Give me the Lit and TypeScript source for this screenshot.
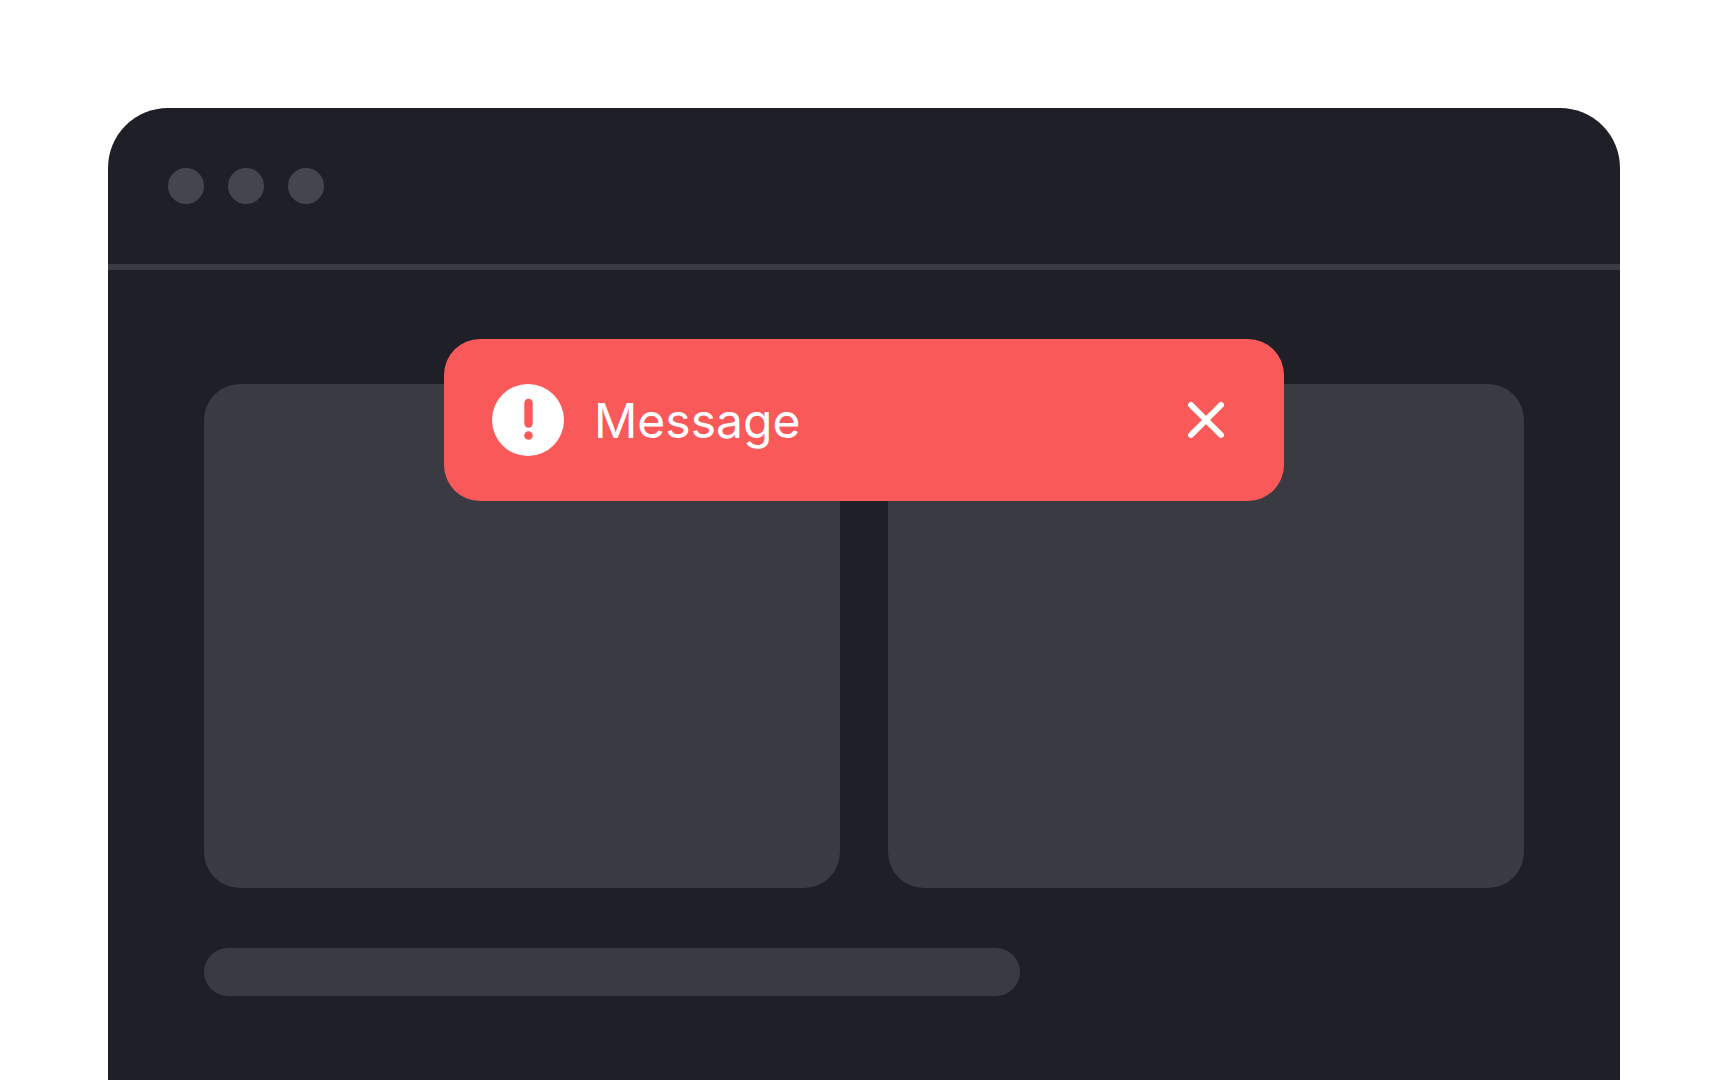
import { LitElement, html, css } from "lit";
import { customElement, state } from "lit/decorators.js";

@customElement("app-root")
export class AppRoot extends LitElement {
  @state() private open = true;

  static styles = css`
    :host {
      display: block;
      background: #ffffff;
      font-family: Inter, "Liberation Sans", sans-serif;
    }
    .stage {
      box-sizing: border-box;
      min-height: 100vh;
      padding: 108px 108px 0;
      display: flex;
    }
    .window {
      position: relative;
      flex: 1;
      display: flex;
      flex-direction: column;
      background: #1f1f27;
      border-radius: 60px 60px 0 0;
    }
    .titlebar {
      display: flex;
      gap: 24px;
      padding: 60px;
      border-bottom: 6px solid #3a3a42;
    }
    .dot {
      width: 36px;
      height: 36px;
      border-radius: 50%;
      background: #45454d;
    }
    .content {
      display: flex;
      flex-direction: column;
      gap: 60px;
      padding: 114px 96px 60px;
    }
    .cards {
      display: grid;
      grid-template-columns: 1fr 1fr;
      gap: 48px;
    }
    .card {
      height: 504px;
      border-radius: 36px;
      background: #3a3a42;
    }
    .line {
      width: 816px;
      max-width: 100%;
      height: 48px;
      border-radius: 24px;
      background: #3a3a42;
    }
    .toast {
      position: absolute;
      top: 231px;
      left: 50%;
      transform: translateX(-50%);
      box-sizing: border-box;
      width: 840px;
      max-width: 100%;
      display: flex;
      align-items: center;
      gap: 30px;
      padding: 44px 48px;
      border-radius: 36px;
      background: #fa5959;
      color: #ffffff;
    }
    .toast[hidden] {
      display: none;
    }
    .icon {
      display: block;
      width: 72px;
      height: 72px;
      flex: none;
    }
    .text {
      flex: 1;
      margin: 0;
      padding-top: 2px;
      font-size: 48px;
      line-height: 72px;
      font-weight: 400;
    }
    .close {
      flex: none;
      width: 60px;
      height: 60px;
      padding: 0;
      border: 0;
      background: none;
      color: inherit;
      cursor: pointer;
    }
    .cross {
      display: block;
      width: 60px;
      height: 60px;
    }
  `;

  render() {
    return html`
      <main class="stage">
        <section class="window">
          <header class="titlebar">
            <span class="dot"></span>
            <span class="dot"></span>
            <span class="dot"></span>
          </header>
          <div class="content">
            <div class="cards">
              <div class="card"></div>
              <div class="card"></div>
            </div>
            <div class="line"></div>
          </div>
          <div class="toast" role="alert" ?hidden=${!this.open}>
            <svg class="icon" viewBox="0 0 72 72" aria-hidden="true">
              <circle cx="36" cy="36" r="36" fill="#ffffff" />
              <path d="M36.5 19V39.5" stroke="#fa5959" stroke-width="8.4" stroke-linecap="round" />
              <circle cx="36.5" cy="51.5" r="4.3" fill="#fa5959" />
            </svg>
            <p class="text">Message</p>
            <button class="close" type="button" aria-label="Close" @click=${() => (this.open = false)}>
              <svg class="cross" viewBox="0 0 60 60" aria-hidden="true">
                <path d="M15 15L45 45M45 15L15 45" fill="none" stroke="currentColor" stroke-width="6" stroke-linecap="round" />
              </svg>
            </button>
          </div>
        </section>
      </main>
    `;
  }
}
